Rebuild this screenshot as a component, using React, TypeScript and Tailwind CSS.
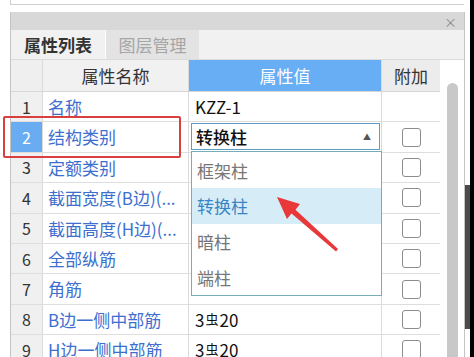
import React from 'react';

type Row = { no: number; name: string; value: React.ReactNode; check: boolean };

const rebar = (n: string, d: string) => (
  <span>
    {n}
    <span className="text-[13px] align-[3px] px-[1px]">虫</span>
    {d}
  </span>
);

const rows: Row[] = [
  { no: 1, name: '名称', value: 'KZZ-1', check: false },
  { no: 2, name: '结构类别', value: '', check: true },
  { no: 3, name: '定额类别', value: '', check: true },
  { no: 4, name: '截面宽度(B边)(...', value: '', check: true },
  { no: 5, name: '截面高度(H边)(...', value: '', check: true },
  { no: 6, name: '全部纵筋', value: '', check: true },
  { no: 7, name: '角筋', value: '', check: true },
  { no: 8, name: 'B边一侧中部筋', value: rebar('3', '20'), check: true },
  { no: 9, name: 'H边一侧中部筋', value: rebar('3', '20'), check: true },
];

const options = ['框架柱', '转换柱', '暗柱', '端柱'];

const Checkbox = () => (
  <div className="w-[19px] h-[19px] rounded-[3px] border-[1.5px] border-[#8c8c8c] bg-white" />
);

const StructureSelect = () => (
  <div className="relative h-full">
    <div className="ml-[2px] mr-[1px] mt-[1px] h-[27px] border border-[#5b9fc4] bg-white flex items-center justify-between pl-[4px] pr-[8px]">
      <span className="text-[17px] text-[#111] font-medium">转换柱</span>
      <span className="text-[8px] text-[#555]">▲</span>
    </div>
    <div className="absolute z-10 left-[2px] top-[28px] w-[191px] h-[145px] border border-[#78adb8] bg-white flex flex-col">
      {options.map((o, i) => (
        <div
          key={o}
          className={`h-[36px] flex items-center pl-[5px] text-[17px] ${
            i === 1 ? 'bg-[#d6edf8] text-[#3a84c4]' : 'text-[#767676]'
          }`}
        >
          {o}
        </div>
      ))}
    </div>
  </div>
);

export default function App() {
  return (
    <div
      className="relative w-[474px] h-[357px] overflow-hidden bg-white flex"
      style={{ fontFamily: '"Noto Sans CJK SC", "Noto Sans", sans-serif' }}
    >
      <div className="w-[465px] flex flex-col">
        <div className="h-[12px] shrink-0">
          <div className="ml-[10px] mr-[1px] h-[5px] border-l border-b border-[#cfcfcf]" />
        </div>
        <div className="flex-1 ml-[10px] border-l border-r border-[#c4c4c4] flex flex-col min-h-0">
          {/* title bar */}
          <div className="h-[18px] shrink-0 bg-[#d8d8d8] flex items-center justify-end pr-[7px]">
            <span className="text-[13px] leading-none text-[#8a8a8a]">×</span>
          </div>
          {/* tabs */}
          <div className="h-[30px] shrink-0 bg-[#f1f1f1] flex border-b border-[#dcdcdc]">
            <div className="w-[94px] flex items-center justify-center text-[17px] font-bold text-[#333] bg-[#f1f1f1]">
              属性列表
            </div>
            <div className="w-[94px] flex items-center justify-center text-[17px] text-[#a6a6a6] bg-[#e3e3e3] border-l border-white">
              图层管理
            </div>
          </div>
          {/* table + scrollbar */}
          <div className="flex-1 flex min-h-0">
            <div className="w-[429px] flex flex-col">
              <div className="h-[32px] shrink-0 flex border-b border-[#d6d6d6] text-[17px]">
                <div className="w-[32px] bg-[#efefef] border-r border-[#dadada]" />
                <div className="w-[146px] bg-[#f1f1f1] border-r border-[#dadada] flex items-center justify-center text-[#333]">
                  属性名称
                </div>
                <div className="w-[193px] bg-[#67aef4] border-r border-[#dadada] flex items-center justify-center text-white">
                  属性值
                </div>
                <div className="w-[58px] bg-[#ececec] flex items-center justify-center text-[#333]">附加</div>
              </div>
              {rows.map((r) => (
                <div key={r.no} className="h-[30.4px] shrink-0 flex border-b border-[#dedede] text-[17px]">
                  <div
                    className={`w-[32px] border-r border-[#dadada] flex items-center justify-center text-[16px] ${
                      r.no === 2 ? 'bg-[#69acf2] text-white' : 'bg-[#f0f0f0] text-[#333]'
                    }`}
                  >
                    {r.no}
                  </div>
                  <div className="w-[146px] border-r border-[#dadada] flex items-center pl-[5px] text-[#3d6fcf] whitespace-nowrap overflow-hidden">
                    {r.name}
                  </div>
                  <div className="w-[193px] border-r border-[#dadada]">
                    {r.no === 2 ? (
                      <StructureSelect />
                    ) : (
                      <div className="h-full flex items-center pl-[6px] text-[#111]">{r.value}</div>
                    )}
                  </div>
                  <div className="w-[58px] flex items-center justify-center">{r.check && <Checkbox />}</div>
                </div>
              ))}
            </div>
            <div className="w-[24px] bg-white pt-[23px] pl-[7px]">
              <div className="w-[11px] h-full rounded-t-[6px] bg-[#c8c8c8]" />
            </div>
          </div>
        </div>
      </div>
      <div className="w-[5px] pt-[185px]">
        <div className="h-[144px] bg-[#4b4b4b]" />
      </div>
      <div className="w-[4px] bg-black" />

      {/* annotation: red box */}
      <div className="absolute z-20 left-[3px] top-[116px] w-[178px] h-[42px] border-2 border-[#d8403f] rounded-[2px] pointer-events-none" />
      {/* annotation: red arrow */}
      <svg className="absolute z-20 left-0 top-0 pointer-events-none" width="474" height="357" viewBox="0 0 474 357">
        <polygon
          points="277,197 300,204 295.5,209.8 338,249 336,251.5 291.5,213.6 287,219"
          fill="#e8383a"
        />
      </svg>
    </div>
  );
}
